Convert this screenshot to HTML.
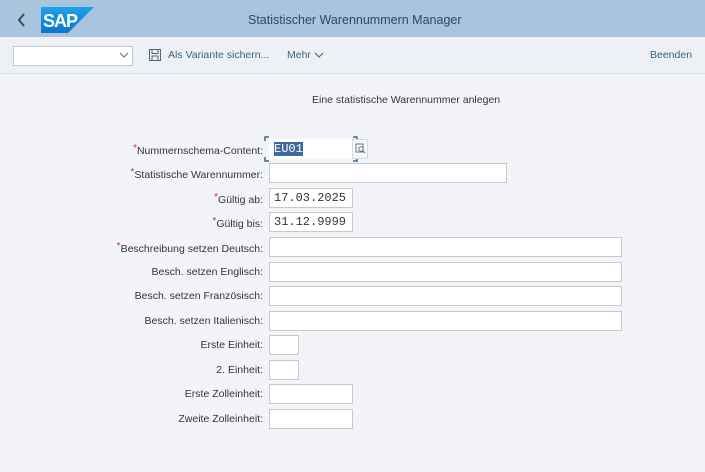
<!DOCTYPE html>
<html><head><meta charset="utf-8"><style>
body{margin:0;width:705px;height:472px;background:#f2f4f7;font-family:"Liberation Sans",sans-serif;position:relative;overflow:hidden}
.hdr{position:absolute;left:0;top:0;width:705px;height:37px;background:#a9c4de;border-top:1px solid #b8c0c8;box-sizing:border-box}
.tb{position:absolute;left:0;top:37px;width:705px;height:37px;background:#edf1f6;border-bottom:1px solid #dde3ea;box-sizing:border-box}
.t{position:absolute;font-size:10.5px;color:#32363a;white-space:nowrap}
.lbl{position:absolute;right:442px;font-size:10.5px;color:#32363a;white-space:nowrap}
.lbl b{color:#d0312d;font-weight:normal;font-size:10px;vertical-align:3px}
.in{position:absolute;left:269px;height:20px;background:#fff;border:1px solid #c4c9cf;box-sizing:border-box;font-family:"Liberation Mono",monospace;font-size:12px;line-height:18px;padding-left:4px;color:#32363a}
</style></head><body>
<div class="hdr">
<svg style="position:absolute;left:16px;top:11px" width="12" height="16"><path d="M8 2L3 8L8 14" stroke="#3e4a56" stroke-width="2" fill="none"/></svg>
<svg style="position:absolute;left:41px;top:6px" width="54" height="26"><defs><linearGradient id="g" x1="0" y1="0" x2="0" y2="1"><stop offset="0" stop-color="#1ba4e9"/><stop offset="1" stop-color="#0b76cc"/></linearGradient></defs><path d="M0 0H53L27 26H0Z" fill="url(#g)"/><text x="2" y="20" font-family="Liberation Sans" font-weight="bold" font-size="18" fill="#fff" letter-spacing="-1">SAP</text></svg>
<div class="t" style="left:248px;top:12px;font-size:12.5px;color:#32475c">Statistischer Warennummern Manager</div>
</div>
<div class="tb">
<div style="position:absolute;left:13px;top:9px;width:120px;height:20px;background:#fff;border:1px solid #c4c9cf;box-sizing:border-box"></div>
<svg style="position:absolute;left:119px;top:15px" width="10" height="7"><path d="M1 1L5 5L9 1" stroke="#6a7580" fill="none"/></svg>
<svg style="position:absolute;left:149px;top:12px" width="12" height="12"><rect x="0.5" y="0.5" width="11" height="11" fill="none" stroke="#4f6780"/><rect x="3" y="0.5" width="6" height="4" fill="none" stroke="#4f6780"/><rect x="3" y="7" width="6" height="4.5" fill="none" stroke="#4f6780"/></svg>
<div class="t" style="left:168px;top:12px;color:#3c5f82">Als Variante sichern...</div>
<div class="t" style="left:287px;top:12px;color:#3c5f82">Mehr</div>
<svg style="position:absolute;left:314px;top:15px" width="10" height="7"><path d="M1 1L5 5L9 1" stroke="#3c5f82" fill="none"/></svg>
<div class="t" style="left:650px;top:12px;color:#3c5f82">Beenden</div>
</div>
<div class="t" style="left:312px;top:94px">Eine statistische Warennummer anlegen</div>

<div class="lbl" style="top:143px"><b>*</b>Nummernschema-Content:</div>
<div class="in" style="top:139px;width:84px;border-color:#fff;"><span style="background:#3d6a9e;color:#fff">EU01</span></div>
<svg style="position:absolute;left:264px;top:136px" width="94" height="26"><path d="M1 5V1H5M89 1H93V5M93 21V25H89M5 25H1V21" stroke="#34689a" stroke-width="1.5" fill="none"/></svg>
<div style="position:absolute;left:352px;top:139px;width:16px;height:20px;background:#f7f7f7;border:1px solid #d5d8dc;box-sizing:border-box"></div>
<svg style="position:absolute;left:355px;top:143px" width="11" height="11"><rect x="1" y="1" width="7" height="8" fill="none" stroke="#6a7580"/><circle cx="6" cy="6" r="2.3" fill="none" stroke="#6a7580"/><path d="M7.5 7.5L10 10" stroke="#6a7580"/></svg>

<div class="lbl" style="top:143px;visibility:hidden"></div>
<div class="lbl" style="top:167px"><b>*</b>Statistische Warennummer:</div>
<div class="in" style="top:163px;width:238px"></div>
<div class="lbl" style="top:192px"><b>*</b>Gültig ab:</div>
<div class="in" style="top:188px;width:84px">17.03.2025</div>
<div class="lbl" style="top:216px"><b>*</b>Gültig bis:</div>
<div class="in" style="top:212px;width:84px">31.12.9999</div>
<div class="lbl" style="top:241px"><b>*</b>Beschreibung setzen Deutsch:</div>
<div class="in" style="top:237px;width:353px"></div>
<div class="lbl" style="top:266px">Besch. setzen Englisch:</div>
<div class="in" style="top:262px;width:353px"></div>
<div class="lbl" style="top:290px">Besch. setzen Französisch:</div>
<div class="in" style="top:286px;width:353px"></div>
<div class="lbl" style="top:315px">Besch. setzen Italienisch:</div>
<div class="in" style="top:311px;width:353px"></div>
<div class="lbl" style="top:339px">Erste Einheit:</div>
<div class="in" style="top:335px;width:30px"></div>
<div class="lbl" style="top:364px">2. Einheit:</div>
<div class="in" style="top:360px;width:30px"></div>
<div class="lbl" style="top:388px">Erste Zolleinheit:</div>
<div class="in" style="top:384px;width:84px"></div>
<div class="lbl" style="top:413px">Zweite Zolleinheit:</div>
<div class="in" style="top:409px;width:84px"></div>
</body></html>
